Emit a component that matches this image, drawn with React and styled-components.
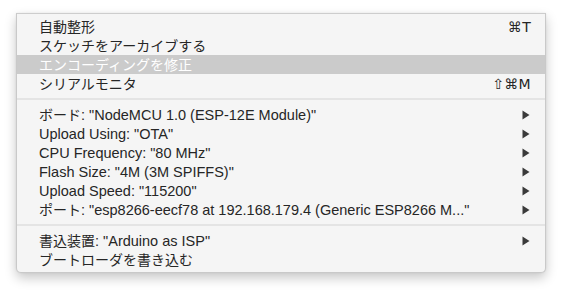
import React from "react";
import styled, { createGlobalStyle } from "styled-components";

const Global = createGlobalStyle`
  html, body { margin: 0; padding: 0; background: #ffffff; }
  body { width: 564px; height: 294px; overflow: hidden; }
`;

const Stage = styled.div`
  padding: 13px 18px 0 16px;
`;

const Menu = styled.div`
  width: 530px;
  box-sizing: border-box;
  background: #f5f5f5;
  border: 1px solid #c9c9c9;
  border-top-color: #cdcdcd;
  border-radius: 0 0 5px 5px;
  box-shadow: 0 5px 12px rgba(0, 0, 0, 0.22), 0 0 2px rgba(0, 0, 0, 0.08);
  padding: 3px 0 3px 0;
  font-family: "Noto Sans CJK JP", "Liberation Sans", sans-serif;
  font-size: 14px;
  color: #262626;
`;

const Item = styled.div`
  display: flex;
  align-items: center;
  height: 19px;
  padding: 0 14px 0 22px;
  background: ${(p) => (p.$active ? "#cbcbcb" : "transparent")};
  color: ${(p) => (p.$active ? "#ffffff" : "#262626")};
`;

const Label = styled.span`
  flex: 1;
  white-space: nowrap;
  line-height: 19px;
`;

const Latin = styled.span`
  font-family: "Liberation Sans", "Noto Sans CJK JP", sans-serif;
  font-size: 14.5px;
`;

const Shortcut = styled.span`
  font-family: "DejaVu Sans", "Liberation Sans", sans-serif;
  font-size: 14px;
  letter-spacing: 0.3px;
  color: #262626;
`;

const Arrow = styled.svg`
  width: 8px;
  height: 10px;
  margin-right: 1px;
  flex: none;
`;

const Separator = styled.div`
  height: 12px;
  display: flex;
  align-items: center;
  &::before {
    content: "";
    flex: 1;
    height: 2px;
    background: #e4e4e4;
  }
`;

const SubArrow = () => (
  <Arrow viewBox="0 0 8 10">
    <path d="M0.5 0.5 L7.5 5 L0.5 9.5 Z" fill="#3a3a3a" />
  </Arrow>
);

const groups = [
  [
    { jp: "自動整形", shortcut: "⌘T" },
    { jp: "スケッチをアーカイブする" },
    { jp: "エンコーディングを修正", active: true },
    { jp: "シリアルモニタ", shortcut: "⇧⌘M" },
  ],
  [
    { jp: "ボード", en: ': "NodeMCU 1.0 (ESP-12E Module)"', sub: true },
    { en: 'Upload Using: "OTA"', sub: true },
    { en: 'CPU Frequency: "80 MHz"', sub: true },
    { en: 'Flash Size: "4M (3M SPIFFS)"', sub: true },
    { en: 'Upload Speed: "115200"', sub: true },
    {
      jp: "ポート",
      en: ': "esp8266-eecf78 at 192.168.179.4 (Generic ESP8266 M..."',
      sub: true,
    },
  ],
  [
    { jp: "書込装置", en: ': "Arduino as ISP"', sub: true },
    { jp: "ブートローダを書き込む" },
  ],
];

export default function App() {
  return (
    <>
      <Global />
      <Stage>
        <Menu>
          {groups.map((g, gi) => (
            <React.Fragment key={gi}>
              {gi > 0 && <Separator />}
              {g.map((it, i) => (
                <Item key={i} $active={it.active}>
                  <Label>
                    {it.jp}
                    {it.en && <Latin>{it.en}</Latin>}
                  </Label>
                  {it.shortcut && <Shortcut>{it.shortcut}</Shortcut>}
                  {it.sub && <SubArrow />}
                </Item>
              ))}
            </React.Fragment>
          ))}
        </Menu>
      </Stage>
    </>
  );
}
